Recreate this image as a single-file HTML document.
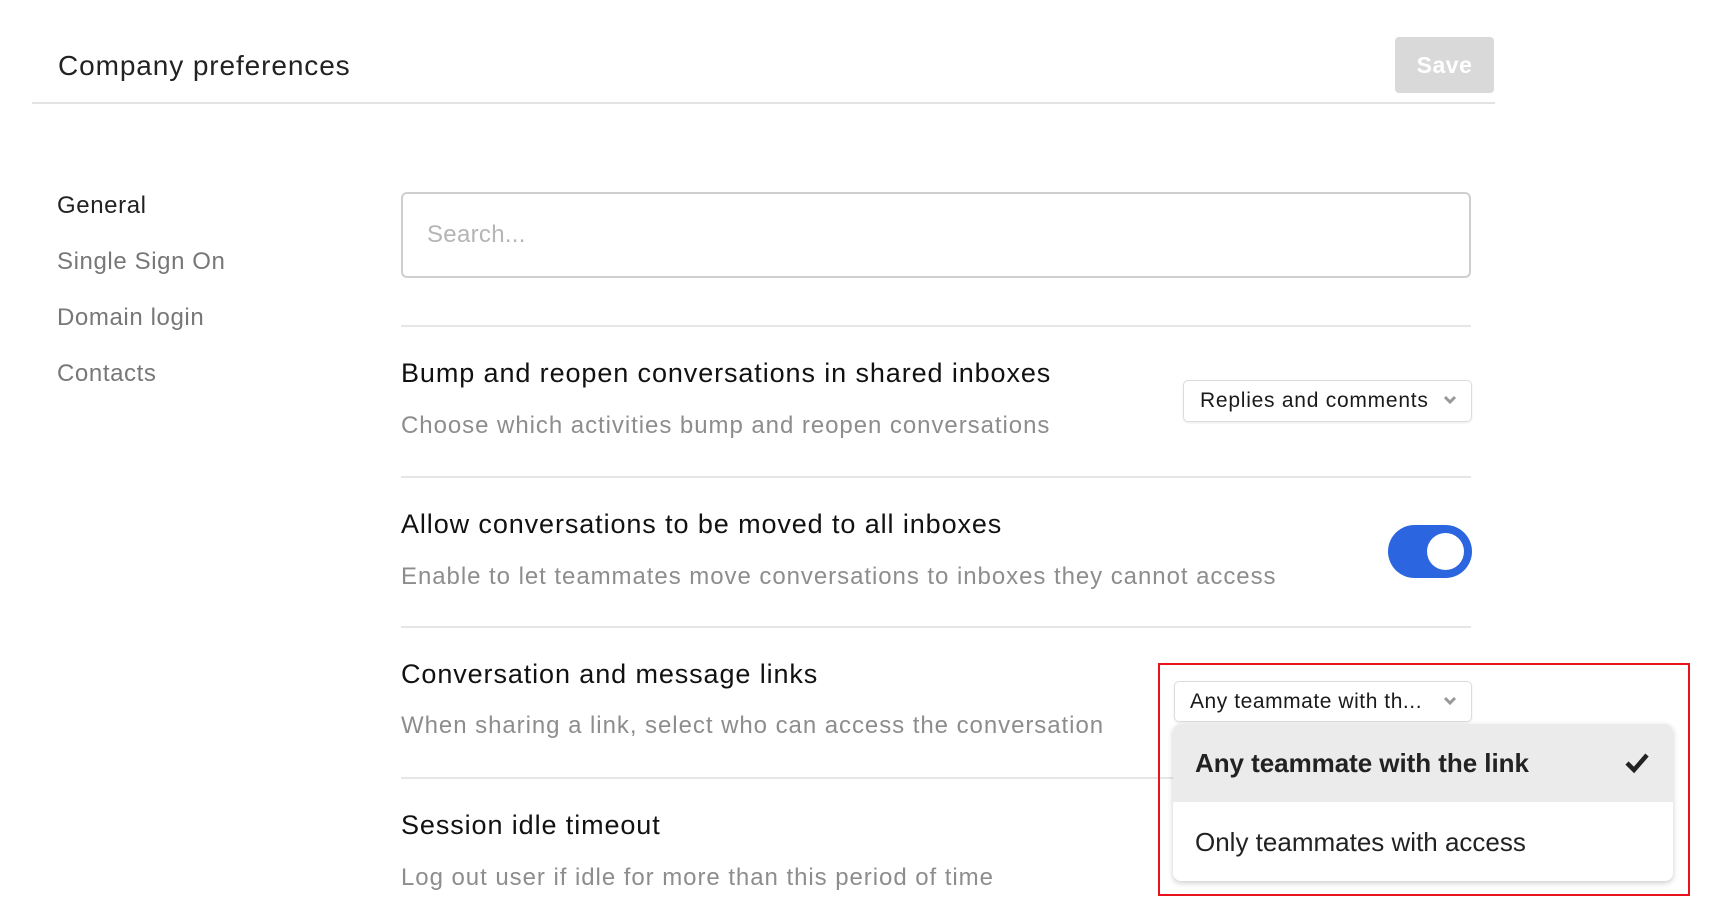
<!DOCTYPE html>
<html><head><meta charset="utf-8"><style>
*{margin:0;padding:0;box-sizing:border-box}
body{width:1720px;height:916px;background:#fff;font-family:"Liberation Sans",Arial,sans-serif;position:relative;overflow:hidden;color:#1a1a1a}
.a{position:absolute;white-space:nowrap}
.title{left:58px;top:48px;font-size:28px;letter-spacing:.9px;color:#222;line-height:36px}
.save{left:1395px;top:37px;width:99px;height:56px;background:#d9d9d9;border-radius:4px;color:#fff;font-size:23px;font-weight:bold;text-align:center;line-height:56px;letter-spacing:.5px}
.hl{left:32px;top:102px;width:1463px;height:2px;background:#e3e3e3}
.nav{left:57px;font-size:24px;color:#777;line-height:30px;letter-spacing:.6px}
.search{left:401px;top:192px;width:1070px;height:86px;border:2px solid #cfcfcf;border-radius:6px}
.ph{left:427px;top:220px;font-size:24px;color:#b5b5b5;line-height:30px;letter-spacing:.3px}
.line{left:401px;width:1070px;height:2px;background:#e6e6e6}
.st{left:401px;font-size:27px;color:#111;line-height:34px;letter-spacing:.9px}
.sd{left:401px;font-size:24px;color:#8d8d8d;line-height:30px;letter-spacing:.95px}
.dd{border:1.5px solid #dcdcdc;border-radius:5px;background:#fff;box-shadow:0 1px 2px rgba(0,0,0,.08);font-size:21px;color:#1a1a1a;line-height:40px;padding-left:16px;letter-spacing:.75px}
.chev{position:absolute;right:14px;top:14px}
.tog{left:1388px;top:525px;width:84px;height:53px;background:#2b66e0;border-radius:27px}
.knob{position:absolute;right:8px;top:8px;width:37px;height:37px;border-radius:50%;background:#fff}
.red{left:1158px;top:663px;width:532px;height:233px;border:2px solid #e8141b}
.menu{left:1173px;top:724px;width:500px;height:157px;background:#fff;border-radius:8px;box-shadow:0 2px 6px rgba(0,0,0,.2);overflow:hidden}
.r1{position:absolute;left:0;top:0;width:100%;height:78px;background:#ebebeb}
</style></head><body>
<div class="a title">Company preferences</div>
<div class="a save">Save</div>
<div class="a hl"></div>
<div class="a nav" style="top:191px;color:#222">General</div>
<div class="a nav" style="top:247px">Single Sign On</div>
<div class="a nav" style="top:303px">Domain login</div>
<div class="a nav" style="top:359px">Contacts</div>
<div class="a search"></div>
<div class="a ph">Search...</div>
<div class="a line" style="top:325px"></div>
<div class="a st" style="top:356px">Bump and reopen conversations in shared inboxes</div>
<div class="a sd" style="top:411px">Choose which activities bump and reopen conversations</div>
<div class="a dd" style="left:1183px;top:380px;width:289px;height:42px">Replies and comments<svg class="chev" width="14" height="10" viewBox="0 0 14 10"><path d="M2 2l5 5 5-5" fill="none" stroke="#999" stroke-width="3"/></svg></div>
<div class="a line" style="top:476px"></div>
<div class="a st" style="top:507px">Allow conversations to be moved to all inboxes</div>
<div class="a sd" style="top:562px">Enable to let teammates move conversations to inboxes they cannot access</div>
<div class="a tog"><div class="knob"></div></div>
<div class="a line" style="top:626px"></div>
<div class="a st" style="top:657px">Conversation and message links</div>
<div class="a sd" style="top:711px">When sharing a link, select who can access the conversation</div>
<div class="a dd" style="left:1174px;top:681px;width:298px;height:41px;padding-left:15px;letter-spacing:.55px">Any teammate with th...<svg class="chev" width="14" height="10" viewBox="0 0 14 10"><path d="M2 2l5 5 5-5" fill="none" stroke="#999" stroke-width="3"/></svg></div>
<div class="a line" style="top:777px"></div>
<div class="a st" style="top:808px">Session idle timeout</div>
<div class="a sd" style="top:863px">Log out user if idle for more than this period of time</div>
<div class="a red"></div>
<div class="a menu"><div class="r1"></div>
<div class="a" style="left:22px;top:23px;font-size:26px;font-weight:bold;color:#222;line-height:32px;letter-spacing:-.05px">Any teammate with the link</div>
<svg class="a" style="left:452px;top:28px" width="24" height="22" viewBox="0 0 24 22"><path d="M2 11l7 7L22 3" fill="none" stroke="#222" stroke-width="4.5"/></svg>
<div class="a" style="left:22px;top:102px;font-size:26px;color:#222;line-height:32px;letter-spacing:0">Only teammates with access</div>
</div>
</body></html>
